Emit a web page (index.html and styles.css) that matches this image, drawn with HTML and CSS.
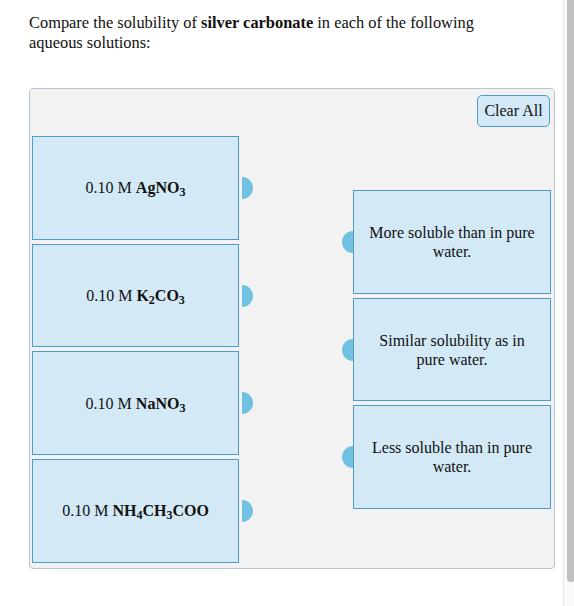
FILE: index.html
```html
<!DOCTYPE html>
<html lang="en">

<head>
	<meta charset="utf-8">
	<title>Solubility matching</title>
	<link rel="stylesheet" href="styles.css">
</head>

<body>
	<div class="page">
		<div class="content">
			<p class="question">Compare the solubility of <b>silver carbonate</b> in each of the following aqueous solutions:</p>

			<div class="panel">
				<div class="toolbar">
					<button class="clear">Clear All</button>
				</div>
				<div class="board">
					<div class="column sources">
						<div class="item">
							<div class="card"><span>0.10 M <b>AgNO<sub>3</sub></b></span></div>
							<span class="tab tab-right"></span>
						</div>
						<div class="item">
							<div class="card"><span>0.10 M <b>K<sub>2</sub>CO<sub>3</sub></b></span></div>
							<span class="tab tab-right"></span>
						</div>
						<div class="item">
							<div class="card"><span>0.10 M <b>NaNO<sub>3</sub></b></span></div>
							<span class="tab tab-right"></span>
						</div>
						<div class="item">
							<div class="card"><span>0.10 M <b>NH<sub>4</sub>CH<sub>3</sub>COO</b></span></div>
							<span class="tab tab-right"></span>
						</div>
					</div>
					<div class="column targets">
						<div class="item">
							<span class="tab tab-left"></span>
							<div class="card target"><span>More soluble than in pure water.</span></div>
						</div>
						<div class="item">
							<span class="tab tab-left"></span>
							<div class="card target"><span>Similar solubility as in pure water.</span></div>
						</div>
						<div class="item">
							<span class="tab tab-left"></span>
							<div class="card target"><span>Less soluble than in pure water.</span></div>
						</div>
					</div>
				</div>
			</div>
		</div>

		<div class="scrollbar">
			<div class="thumb"></div>
		</div>
	</div>
</body>

</html>
```

FILE: styles.css
```css
html, body {
	margin: 0;
	height: 100%;
}
body {
	background-color: white;
	color: #111;
	font-family: "Liberation Serif", "Times New Roman", serif;
	font-size: 16px;
	overflow: hidden;
}
.page {
	display: flex;
	height: 606px;
}
.content {
	flex: 1;
	padding-left: 29px;
}
.question {
	margin: 0;
	padding-top: 13px;
	width: 460px;
	font-size: 16.4px;
	line-height: 20px;
}
.panel {
	margin-top: 35px;
	width: 524px;
	height: 479px;
	border: 1px solid #b8c6d4;
	border-radius: 4px;
	background-color: #f2f2f2;
}
.toolbar {
	display: flex;
	justify-content: flex-end;
	padding: 6px 4px 0 0;
}
.clear {
	height: 32px;
	width: 73px;
	padding: 0;
	background-color: #d3e9f7;
	color: #111;
	border: 1px solid #4f9cc7;
	border-radius: 5px;
	font-family: inherit;
	font-size: 16px;
}
.board {
	display: flex;
	justify-content: space-between;
	padding: 9px 3px 0 2px;
}
.column {
	display: flex;
	flex-direction: column;
	gap: 4px;
}
.targets {
	margin-top: 54px;
}
.item {
	display: flex;
	align-items: center;
}
.card {
	display: flex;
	align-items: center;
	justify-content: center;
	box-sizing: border-box;
	width: 207px;
	height: 103.7px;
	padding: 0 12px;
	background-color: #d3e9f6;
	border: 1px solid #4d9bc6;
	text-align: center;
	line-height: 19px;
}
.target {
	width: 198px;
}
.card sub {
	font-size: 12px;
	line-height: 0;
	vertical-align: -3px;
}
.tab {
	display: block;
	width: 11px;
	height: 22px;
	background-color: #70c1e2;
}
.tab-right {
	margin-left: 3px;
	border-radius: 0 11px 11px 0;
}
.tab-left {
	border-radius: 11px 0 0 11px;
}
.scrollbar {
	box-sizing: border-box;
	width: 11px;
	padding-left: 3px;
	border-left: 1px solid #e9e9e9;
	background-color: #fafafa;
}
.thumb {
	width: 8px;
	height: 582px;
	background-color: #c1c1c1;
	border-radius: 0 0 4px 4px;
}
```
